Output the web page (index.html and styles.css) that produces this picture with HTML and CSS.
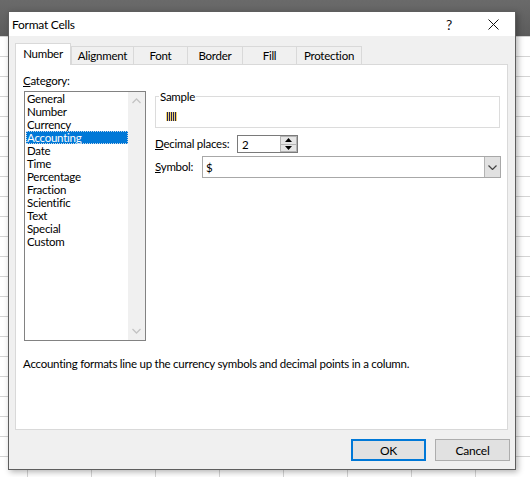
FILE: index.html
```html
<!DOCTYPE html>
<html>
<head>
<meta charset="utf-8">
<title>Format Cells</title>
<link rel="stylesheet" href="styles.css">
</head>
<body>
<div class="desk">
  <div class="dialog">
    <div class="titlebar">
      <span class="title">Format Cells</span>
      <span class="help">?</span>
      <span class="close"><svg width="11" height="11" viewBox="0 0 11 11"><path d="M0.5 0.5 L10.5 10.5 M10.5 0.5 L0.5 10.5" stroke="#111" stroke-width="1" fill="none"/></svg></span>
    </div>
    <div class="body">
      <div class="tabs">
        <div class="tab selected w1">Number</div>
        <div class="tab w2">Alignment</div>
        <div class="tab w3">Font</div>
        <div class="tab w4">Border</div>
        <div class="tab w5">Fill</div>
        <div class="tab w6 last">Protection</div>
      </div>
      <div class="panel">
        <div class="main">
          <div class="leftcol">
            <div class="label cat"><u>C</u>ategory:</div>
            <div class="listbox">
              <ul class="items">
                <li>General</li>
                <li>Number</li>
                <li>Currency</li>
                <li class="sel">Accounting</li>
                <li>Date</li>
                <li>Time</li>
                <li>Percentage</li>
                <li>Fraction</li>
                <li>Scientific</li>
                <li>Text</li>
                <li>Special</li>
                <li>Custom</li>
              </ul>
              <div class="vscroll">
                <svg class="arrow" width="9" height="6" viewBox="0 0 9 6"><path d="M0.5 5 L4.5 1 L8.5 5" stroke="#c4c4c4" stroke-width="1.3" fill="none"/></svg>
                <svg class="arrow" width="9" height="6" viewBox="0 0 9 6"><path d="M0.5 1 L4.5 5 L8.5 1" stroke="#c4c4c4" stroke-width="1.3" fill="none"/></svg>
              </div>
            </div>
          </div>
          <div class="rightcol">
            <div class="group">
              <span class="legend">Sample</span>
              <svg class="bars" width="11" height="9" viewBox="0 0 11 9" shape-rendering="crispEdges">
                <rect x="0" y="0" width="11" height="9" fill="#f2d36a"/>
                <rect x="1" y="0" width="1" height="9" fill="#23235e"/>
                <rect x="3" y="0" width="1" height="9" fill="#23235e"/>
                <rect x="5" y="0" width="1" height="9" fill="#23235e"/>
                <rect x="7" y="0" width="1" height="9" fill="#23235e"/>
                <rect x="9" y="0" width="1" height="9" fill="#23235e"/>
              </svg>
            </div>
            <div class="row dec">
              <span class="label lab-dec"><u>D</u>ecimal places:</span>
              <div class="spin">
                <span class="val">2</span>
                <div class="spinbtns">
                  <span class="sb"><svg width="7" height="4" viewBox="0 0 7 4"><path d="M0 4 L3.5 0 L7 4 Z" fill="#000"/></svg></span>
                  <span class="sb"><svg width="7" height="4" viewBox="0 0 7 4"><path d="M0 0 L3.5 4 L7 0 Z" fill="#000"/></svg></span>
                </div>
              </div>
            </div>
            <div class="row sym">
              <span class="label lab-sym"><u>S</u>ymbol:</span>
              <div class="combo">
                <span class="val">$</span>
                <span class="dd"><svg width="9" height="5" viewBox="0 0 9 5"><path d="M0.5 0.5 L4.5 4.5 L8.5 0.5" stroke="#444" stroke-width="1.2" fill="none"/></svg></span>
              </div>
            </div>
          </div>
        </div>
        <p class="desc">Accounting formats line up the currency symbols and decimal points in a column.</p>
      </div>
      <div class="buttons">
        <button class="btn ok">OK</button>
        <button class="btn cancel">Cancel</button>
      </div>
    </div>
  </div>
</div>
</body>
</html>
```
FILE: styles.css
```css
html, body {
  margin: 0;
  padding: 0;
}
body {
  width: 530px;
  height: 477px;
  overflow: hidden;
  font-family: "Lato", "Liberation Sans", sans-serif;
  font-size: 11.5px;
  letter-spacing: -0.25px;
  color: #000;
}
.desk {
  width: 530px;
  height: 477px;
  box-sizing: border-box;
  padding: 11px 0 0 8px;
  background-color: #ffffff;
  background-image:
    linear-gradient(to bottom, #6a6a6a 0, #5c5c5c 36px, transparent 36px),
    repeating-linear-gradient(to bottom, transparent 0 19px, #d4d4d4 19px 20px),
    repeating-linear-gradient(to right, transparent 0 63px, #d4d4d4 63px 64px);
  background-position: 0 0, 0 -3px, -36px 0;
}
.dialog {
  width: 508px;
  height: 459px;
  box-sizing: border-box;
  border: 1px solid #5e5e5e;
  background: #f0f0f0;
  box-shadow: 2px 2px 6px rgba(0, 0, 0, 0.3);
  display: flex;
  flex-direction: column;
}
.titlebar {
  height: 24px;
  background: #ffffff;
  display: flex;
  align-items: center;
  padding-left: 3px;
}
.title {
  flex: 1;
  font-size: 12px;
}
.help {
  font-size: 14px;
  margin-right: 36px;
  color: #111;
}
.close {
  display: flex;
  margin-right: 16px;
}
.body {
  flex: 1;
  padding-top: 7px;
}
.tabs {
  display: flex;
  align-items: flex-end;
  height: 21px;
  margin-left: 6px;
}
.tab {
  height: 18px;
  box-sizing: border-box;
  border-top: 1px solid #d9d9d9;
  border-left: 1px solid #d9d9d9;
  display: flex;
  align-items: center;
  justify-content: center;
  background: #f0f0f0;
}
.tab.last {
  border-right: 1px solid #d9d9d9;
}
.tab.selected {
  height: 22px;
  margin-bottom: -1px;
  background: #ffffff;
  border-right: 1px solid #d9d9d9;
  position: relative;
  z-index: 1;
  padding-bottom: 2px;
}
.w1 { width: 56px; }
.w2 { width: 62px; }
.w3 { width: 54px; }
.w4 { width: 55px; }
.w5 { width: 54px; }
.w6 { width: 66px; }
.panel {
  width: 493px;
  height: 366px;
  box-sizing: border-box;
  margin-left: 6px;
  border: 1px solid #d9d9d9;
  background: #ffffff;
  padding: 9px 0 0 8px;
}
.main {
  display: flex;
}
.label {
  line-height: 14px;
}
.cat {
  margin-left: -1px;
}
.listbox {
  margin-top: 3px;
  width: 122px;
  height: 250px;
  box-sizing: border-box;
  border: 1px solid #828282;
  display: flex;
}
.items {
  list-style: none;
  margin: 0;
  padding: 0;
  width: 103px;
}
.items li {
  height: 13px;
  line-height: 13px;
  padding-left: 2px;
}
.items li.sel {
  margin-left: 1px;
  padding-left: 1px;
  background: #0078d7;
  color: #ffffff;
  outline: 1px dotted #c9d8e8;
  outline-offset: -1px;
}
.vscroll {
  width: 17px;
  background: #f0f0f0;
  display: flex;
  flex-direction: column;
  justify-content: space-between;
  align-items: center;
  padding: 6px 0 6px;
}
.rightcol {
  margin-left: 9px;
  padding-top: 22px;
}
.group {
  width: 345px;
  height: 32px;
  box-sizing: border-box;
  border: 1px solid #dcdcdc;
}
.legend {
  display: block;
  width: fit-content;
  line-height: 14px;
  margin-top: -7px;
  margin-left: 3px;
  padding: 0 1px;
  background: #ffffff;
}
.bars {
  display: block;
  margin: 8px 0 0 10px;
}
.row {
  display: flex;
  align-items: center;
}
.dec {
  margin-top: 7px;
}
.sym {
  margin-top: 3px;
}
.lab-dec {
  width: 82px;
}
.lab-sym {
  width: 47px;
}
.spin {
  width: 61px;
  height: 18px;
  box-sizing: border-box;
  border: 1px solid #7a7a7a;
  display: flex;
  align-items: center;
}
.spin .val {
  flex: 1;
  padding-left: 4px;
}
.spinbtns {
  width: 17px;
  height: 16px;
  display: flex;
  flex-direction: column;
}
.sb {
  flex: 1;
  box-sizing: border-box;
  background: #e6e6e6;
  border: 1px solid #b4b4b4;
  display: flex;
  align-items: center;
  justify-content: center;
}
.sb + .sb {
  border-top: none;
}
.combo {
  width: 299px;
  height: 22px;
  box-sizing: border-box;
  border: 1px solid #a8a8a8;
  display: flex;
  align-items: center;
}
.combo .val {
  flex: 1;
  padding-left: 3px;
}
.dd {
  width: 16px;
  height: 20px;
  box-sizing: border-box;
  background: #e1e1e1;
  border-left: 1px solid #b4b4b4;
  display: flex;
  align-items: center;
  justify-content: center;
}
.desc {
  margin: 16px 0 0 -1px;
  line-height: 14px;
}
.buttons {
  display: flex;
  justify-content: flex-end;
  gap: 9px;
  margin-top: 9px;
  padding-right: 5px;
}
.btn {
  width: 75px;
  height: 22px;
  box-sizing: border-box;
  background: #e1e1e1;
  border: 1px solid #adadad;
  font-family: inherit;
  font-size: 12px;
  letter-spacing: -0.25px;
  color: #000;
  padding: 0;
}
.btn.ok {
  border: 2px solid #0078d7;
}
```
